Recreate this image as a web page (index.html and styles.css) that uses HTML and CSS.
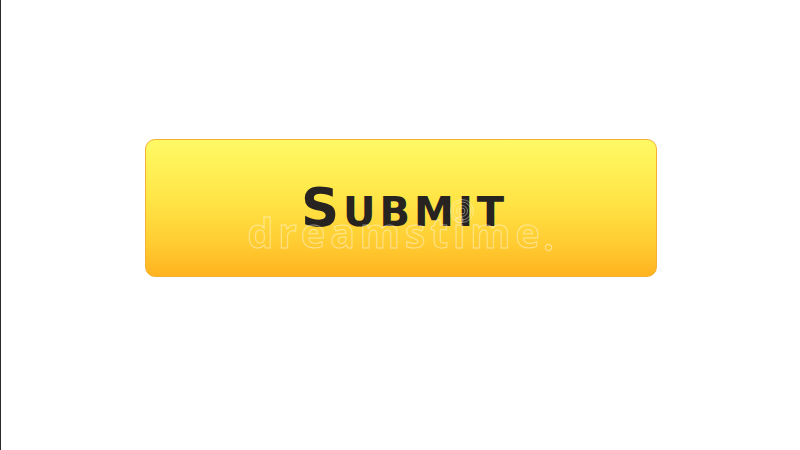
FILE: index.html
```html
<!DOCTYPE html>
<html lang="en">
<head>
    <meta charset="UTF-8">
    <meta name="viewport" content="width=device-width, initial-scale=1.0">
    <title>Submit</title>
    <link rel="stylesheet" href="styles.css">
</head>
<body>
    <div class="page">
        <button class="submit" type="button">
            <span class="label"><span class="first">S</span>ubmit</span>
            <span class="mark">dreamstime</span>
            <svg class="reg" width="9" height="9" viewBox="0 0 9 9"><circle cx="4.5" cy="4.5" r="3.2" fill="none" stroke="rgba(255,255,255,0.55)" stroke-width="1"/></svg>
            <svg class="logo" width="26" height="26" viewBox="0 0 26 26">
                <circle cx="13" cy="13" r="11.5" fill="none" stroke="rgba(255,255,255,0.4)" stroke-width="1"/>
                <circle cx="13" cy="13" r="9" fill="none" stroke="rgba(255,255,255,0.4)" stroke-width="1"/>
                <circle cx="13" cy="13" r="5.5" fill="none" stroke="rgba(255,255,255,0.4)" stroke-width="1"/>
                <circle cx="13" cy="13" r="3" fill="none" stroke="rgba(255,255,255,0.4)" stroke-width="1"/>
            </svg>
        </button>
    </div>
</body>
</html>
```

FILE: styles.css
```css
html, body{
    margin: 0;
    height: 100%;
    background-color: #fff;
}
body{
    border-left: 1px solid #2b2b2b;
    box-sizing: border-box;
}
.page{
    display: flex;
    justify-content: center;
    padding-top: 139px;
}
.submit{
    position: relative;
    width: 512px;
    height: 138px;
    border: 1px solid #f3b133;
    border-radius: 10px;
    background: linear-gradient(to bottom, #fff965 0%, #fff35a 15%, #ffe445 45%, #ffcd33 75%, #ffb31f 100%);
    display: flex;
    justify-content: center;
    align-items: center;
    padding: 0;
    cursor: pointer;
    overflow: hidden;
}
.label{
    font-family: "DejaVu Sans", sans-serif;
    font-weight: bold;
    font-size: 40px;
    text-transform: uppercase;
    letter-spacing: 4px;
    color: #262320;
    margin-left: 8px;
    margin-top: -2px;
}
.first{
    font-size: 53px;
}
/* faint hollow stamp running under the label */
.mark{
    position: absolute;
    left: 102px;
    top: 72px;
    font-family: "Noto Sans", sans-serif;
    font-weight: bold;
    font-size: 41px;
    letter-spacing: 5px;
    color: transparent;
    -webkit-text-stroke: 1px rgba(255,255,255,0.45);
    line-height: 1;
}
.reg{
    position: absolute;
    left: 398px;
    top: 103px;
}
.logo{
    position: absolute;
    left: 303px;
    top: 58px;
}
```
